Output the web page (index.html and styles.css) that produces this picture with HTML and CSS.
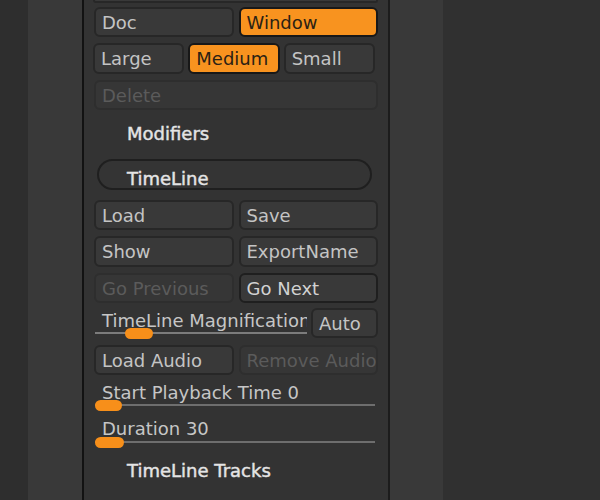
FILE: index.html
```html
<!DOCTYPE html>
<html>
<head>
<meta charset="utf-8">
<link rel="stylesheet" href="styles.css">
</head>
<body>
<div class="screen">
  <div class="gutter"></div>
  <div class="strip"></div>
  <div class="panel">
    <div class="stub"></div>
    <div class="row two r1">
      <div class="btn">Doc</div>
      <div class="btn on">Window</div>
    </div>
    <div class="row three r2">
      <div class="btn">Large</div>
      <div class="btn on">Medium</div>
      <div class="btn">Small</div>
    </div>
    <div class="row one r3">
      <div class="btn off">Delete</div>
    </div>
    <div class="header modifiers">Modifiers</div>
    <div class="pill">TimeLine</div>
    <div class="row two r4">
      <div class="btn">Load</div>
      <div class="btn">Save</div>
    </div>
    <div class="row two r5">
      <div class="btn">Show</div>
      <div class="btn">ExportName</div>
    </div>
    <div class="row two r6">
      <div class="btn off">Go Previous</div>
      <div class="btn strong">Go Next</div>
    </div>
    <div class="row mag">
      <div class="slider mag-slider">
        <div class="slider-label">TimeLine Magnification</div>
        <div class="track"><div class="knob knob-mag"></div></div>
      </div>
      <div class="btn auto">Auto</div>
    </div>
    <div class="row two r7">
      <div class="btn">Load Audio</div>
      <div class="btn off">Remove Audio</div>
    </div>
    <div class="slider wide start">
      <div class="slider-label">Start Playback Time 0</div>
      <div class="track"><div class="knob knob-start"></div></div>
    </div>
    <div class="slider wide dur">
      <div class="slider-label">Duration 30</div>
      <div class="track"><div class="knob knob-dur"></div></div>
    </div>
    <div class="header tracks">TimeLine Tracks</div>
  </div>
  <div class="strip right"></div>
  <div class="gutter fill"></div>
</div>
</body>
</html>
```
FILE: styles.css
```css
html, body {
  margin: 0;
  padding: 0;
  background: #2f2f2f;
}
body {
  font-family: "DejaVu Sans", "Liberation Sans", sans-serif;
  font-size: 18px;
  color: #c6c6c6;
}
.screen {
  display: flex;
  width: 600px;
  height: 500px;
  overflow: hidden;
}
.gutter {
  width: 28px;
  flex: none;
  background: #2e2e2e;
}
.gutter.fill {
  flex: 1;
  background: #303030;
}
.strip {
  width: 54px;
  flex: none;
  background: #393939;
}
.strip.right {
  width: 53px;
}
.panel {
  width: 284px;
  flex: none;
  background: #333333;
  border-left: 2px solid #121212;
  border-right: 2px solid #1c1c1c;
  padding: 0 10px;
  box-sizing: content-box;
  display: flex;
  flex-direction: column;
}
.panel > * {
  flex: none;
}
.stub {
  height: 3px;
  margin: 0 0 0 -1px;
  box-sizing: border-box;
  background: #393939;
  border: 2px solid #272727;
  border-top: none;
  border-radius: 0 0 6px 6px;
}
.row {
  display: grid;
  gap: 5px;
  width: 284px;
}
.row.two { grid-template-columns: 1fr 1fr; }
.row.three { grid-template-columns: 1fr 1fr 1fr; gap: 4px; width: 282px; margin-left: -1px; }
.row.one { grid-template-columns: 1fr; }
.r1 { margin-top: 4px; height: 30px; }
.r2 { margin-top: 6px; height: 31px; }
.r3 { margin-top: 6px; height: 30px; }
.r4 { margin-top: 10px; height: 30px; }
.r5 { margin-top: 6px; height: 31px; }
.r6 { margin-top: 6px; height: 30px; }
.r7 { margin-top: 7px; height: 30px; }
.btn {
  box-sizing: border-box;
  height: 100%;
  background: #393939;
  border: 2px solid #272727;
  border-radius: 6px;
  padding-left: 6px;
  display: flex;
  align-items: center;
  white-space: nowrap;
  overflow: hidden;
  color: #c4c4c4;
}
.btn.on {
  background: #f8931f;
  border-color: #181818;
  color: #2b2214;
}
.btn.off {
  background: #363636;
  border-color: #2e2e2e;
  color: #5b5b5b;
}
.btn.strong {
  border-color: #1f1f1f;
  color: #d2d2d2;
}
.header, .pill {
  font-size: 18px;
  color: #e4e4e4;
  -webkit-text-stroke: 0.45px #e4e4e4;
}
.header {
  padding-left: 33px;
}
.modifiers {
  height: 48px;
  line-height: 48px;
}
.tracks {
  margin-top: 13px;
  height: 30px;
  line-height: 30px;
}
.pill {
  margin-top: 1px;
  margin-left: 3px;
  width: 275px;
  height: 31px;
  box-sizing: border-box;
  border: 2px solid #1f1f1f;
  border-radius: 16px;
  background: #343434;
  padding: 7px 0 0 28px;
  line-height: 21px;
}
.mag {
  margin-top: 5px;
  height: 30px;
  display: flex;
  gap: 4px;
}
.slider {
  display: flex;
  flex-direction: column;
}
.slider-label {
  height: 22px;
  line-height: 22px;
  padding-left: 8px;
  white-space: nowrap;
  overflow: hidden;
  color: #c6c6c6;
}
.mag-slider {
  width: 213px;
  padding-top: 2px;
}
.track {
  position: relative;
  height: 2px;
  margin-left: 1px;
  background: #6e6e6e;
}
.mag-slider .track {
  background: #7c7c7c;
}
.knob {
  position: absolute;
  top: -4px;
  height: 11px;
  box-sizing: border-box;
  background: #f78f1a;
  border-radius: 6px;
}
.knob-mag { left: 30px; width: 28px; }
.knob-start { left: 0; width: 27px; }
.knob-dur { left: 0; width: 29px; }
.auto {
  flex: 1;
}
.wide {
  width: 281px;
}
.start { margin-top: 7px; }
.dur { margin-top: 12px; }
.dur .track { margin-top: 1px; }
```
